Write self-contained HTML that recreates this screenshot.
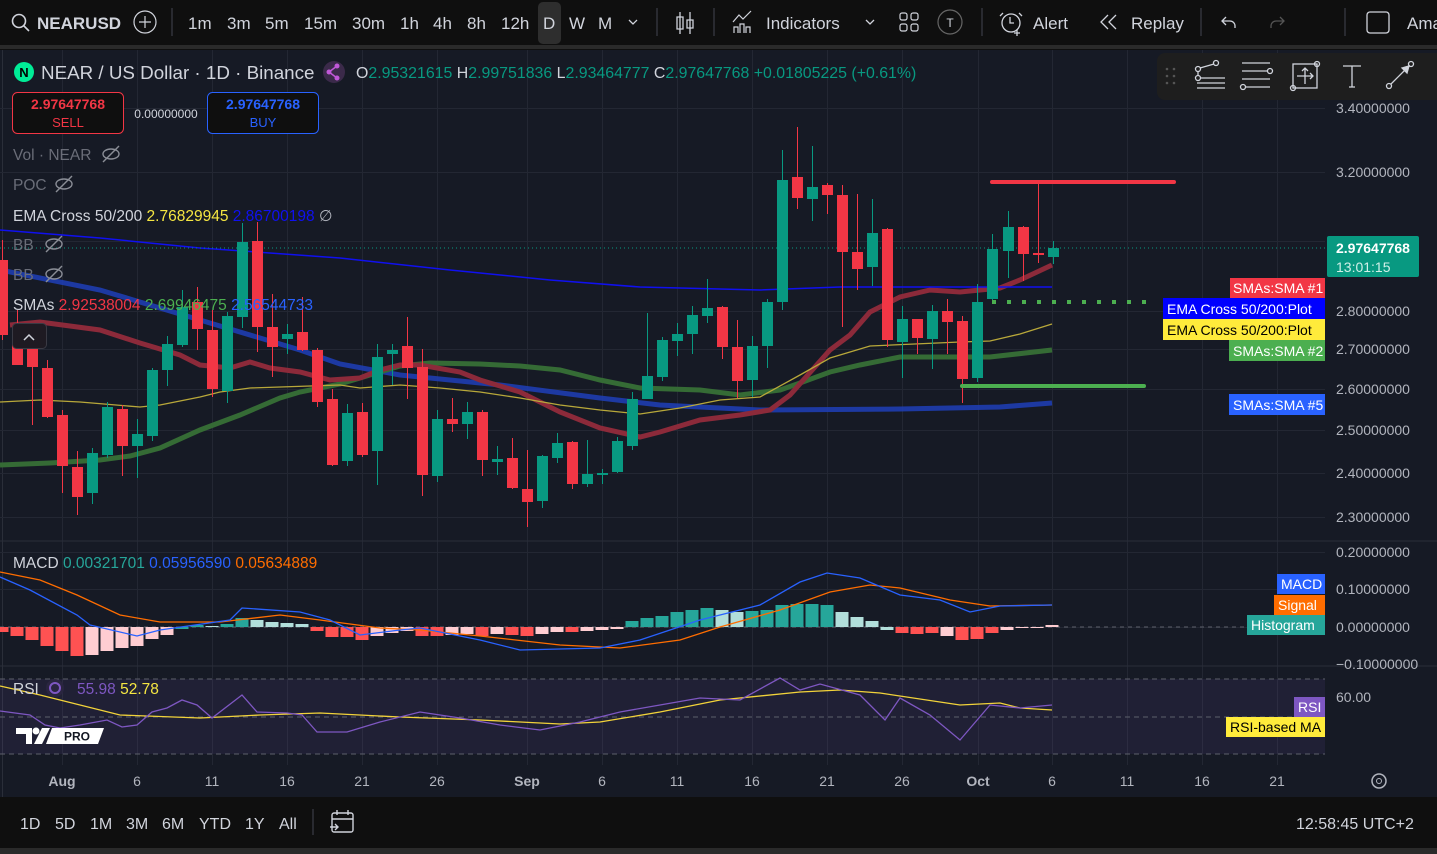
<!DOCTYPE html>
<html><head><meta charset="utf-8"><style>
*{margin:0;padding:0;box-sizing:border-box}
body{width:1437px;height:854px;background:#0f0f0f;overflow:hidden;font-family:"Liberation Sans",sans-serif;color:#d1d4dc;position:relative}
svg{position:absolute;left:0;top:0}
</style></head><body>
<svg id="s" width="1437" height="854" xmlns="http://www.w3.org/2000/svg" font-family="Liberation Sans, sans-serif">
<rect x="0" y="0" width="1437" height="854" fill="#0f0f0f"/>
<rect x="0" y="45" width="1437" height="4" fill="#2a2a2a"/>
<rect x="0" y="50" width="1437" height="747" fill="#161a25"/>
<rect x="2" y="50" width="1" height="747" fill="#2a2e39"/>
<g id="grid" stroke="#232733" stroke-width="1"></g>
<line x1="0" y1="541" x2="1437" y2="541" stroke="#2a2e39"/>
<line x1="0" y1="666" x2="1437" y2="666" stroke="#2a2e39"/>
<rect x="0" y="679" width="1325" height="75" fill="#7e57c2" fill-opacity="0.1"/>
<g stroke="#5d606b" stroke-dasharray="5,4" stroke-width="1">
<line x1="0" y1="679" x2="1325" y2="679"/><line x1="0" y1="717" x2="1325" y2="717"/><line x1="0" y1="754" x2="1325" y2="754"/>
</g>
<line x1="0" y1="627" x2="1325" y2="627" stroke="#5d606b" stroke-dasharray="4,4"/>
<polyline fill="none" stroke="#1e3fb8" stroke-opacity="0.85" stroke-width="5" points="0,270 100,290 200,320 300,350 340,364 400,375 500,385 600,398 660,405 760,410 900,409 1000,407 1052,403"/>
<polyline fill="none" stroke="#356b35" stroke-width="5" points="0,465 50,463 100,460 130,456 160,448 200,430 240,415 280,398 300,392 340,384 370,375 400,366 430,363 480,364 520,366 560,370 600,380 640,388 700,390 740,395 780,390 800,383 830,372 860,365 900,357 990,357 1052,350"/>
<polyline fill="none" stroke="#8c2a3a" stroke-width="5" points="10,325 40,322 100,330 140,343 180,355 200,365 230,368 250,362 270,368 300,372 330,380 360,378 380,370 400,365 420,365 460,372 480,380 520,392 560,412 600,428 640,437 660,432 700,420 740,415 770,410 790,395 830,350 850,335 870,312 900,297 930,290 960,292 1000,288 1020,280 1052,265"/>
<polyline fill="none" stroke="#b8a83a" stroke-width="1.3" points="0,402 40,400 80,402 140,407 160,405 200,397 220,392 250,388 340,385 360,388 400,385 440,388 480,392 520,398 560,405 600,410 640,414 680,408 720,400 760,397 800,375 830,358 870,346 960,342 990,341 1020,334 1052,324"/>
<polyline fill="none" stroke="#1010f0" stroke-width="1.5" points="0,230 100,238 200,248 340,258 450,270 550,280 640,287 760,290 840,287 1052,287"/>
<line x1="0" y1="248" x2="1325" y2="248" stroke="#089981" stroke-dasharray="1,3"/>
<g id="candles"></g>
<line x1="992" y1="182" x2="1174" y2="182" stroke="#f23645" stroke-width="4" stroke-linecap="round"/>
<line x1="992" y1="302" x2="1150" y2="302" stroke="#4caf50" stroke-width="4" stroke-dasharray="4,11"/>
<line x1="962" y1="386" x2="1144" y2="386" stroke="#4caf50" stroke-width="4" stroke-linecap="round"/>
<g id="hist"></g>
<polyline fill="none" stroke="#ff6d00" stroke-width="1.3" points="0,572 40,580 77,595 120,615 160,622 220,622 280,615 320,620 380,628 420,630 480,636 560,645 620,648 680,640 720,627 780,610 830,592 870,585 900,588 950,600 990,606 1052,605"/>
<polyline fill="none" stroke="#2962ff" stroke-width="1.3" points="0,577 30,590 77,615 90,625 137,636 160,630 230,620 242,608 300,612 330,620 360,635 400,630 420,628 480,640 520,650 600,648 640,640 700,620 760,605 800,582 827,573 860,578 900,595 940,600 970,612 1000,606 1052,605"/>
<polyline fill="none" stroke="#f2d33a" stroke-width="1.3" points="0,686 40,695 120,715 200,718 260,715 320,713 400,717 480,720 560,724 600,722 660,712 720,700 800,692 840,690 880,693 960,705 1000,703 1020,708 1052,710"/>
<polyline fill="none" stroke="#7e57c2" stroke-width="1.3" points="0,711 30,715 45,725 60,728 80,725 107,720 122,727 137,725 152,712 167,708 182,700 197,705 212,718 242,695 257,712 287,713 302,715 317,732 347,732 380,722 420,712 460,718 500,725 540,730 580,722 620,712 660,705 700,698 740,700 780,678 800,690 820,684 860,695 885,720 900,698 930,715 960,740 990,705 1020,708 1052,705"/>
<rect x="1327" y="236" width="92" height="41" rx="2" fill="#089981"/>
<rect x="1230" y="278" width="95" height="20" fill="#f23645"/>
<rect x="1163" y="298" width="162" height="21" fill="#0000ff"/>
<rect x="1163" y="319" width="162" height="21" fill="#ffeb3b"/>
<rect x="1229" y="340" width="96" height="21" fill="#4caf50"/>
<rect x="1229" y="394" width="96" height="21" fill="#2962ff"/>
<rect x="1277" y="574" width="48" height="20" fill="#2962ff"/>
<rect x="1274" y="595" width="51" height="20" fill="#ff6d00"/>
<rect x="1247" y="615" width="78" height="20" fill="#26a69a"/>
<rect x="1294" y="697" width="31" height="20" fill="#7e57c2"/>
<rect x="1226" y="717" width="99" height="20" fill="#ffeb3b"/>
<g font-size="14" fill="#fff">
<text x="1336" y="253" font-weight="bold">2.97647768</text>
<text x="1336" y="272" fill="#d0f0e8">13:01:15</text>
<text x="1233" y="293">SMAs:SMA #1</text>
<text x="1167" y="314">EMA Cross 50/200:Plot</text>
<text x="1167" y="335" fill="#000">EMA Cross 50/200:Plot</text>
<text x="1233" y="356">SMAs:SMA #2</text>
<text x="1233" y="410">SMAs:SMA #5</text>
<text x="1281" y="589">MACD</text>
<text x="1278" y="610">Signal</text>
<text x="1251" y="630">Histogram</text>
<text x="1298" y="712">RSI</text>
<text x="1230" y="732" fill="#000">RSI-based MA</text>
</g>
<g font-size="14" fill="#b2b5be">
<text x="1336" y="113">3.40000000</text><text x="1336" y="177">3.20000000</text><text x="1336" y="316">2.80000000</text>
<text x="1336" y="354">2.70000000</text><text x="1336" y="394">2.60000000</text><text x="1336" y="435">2.50000000</text>
<text x="1336" y="478">2.40000000</text><text x="1336" y="522">2.30000000</text>
<text x="1336" y="557">0.20000000</text><text x="1336" y="594">0.10000000</text><text x="1336" y="632">0.00000000</text><text x="1336" y="669">−0.10000000</text>
<text x="1336" y="702">60.00</text>
</g>
<g font-size="14" fill="#b2b5be" text-anchor="middle">
<text x="62" y="786" font-weight="bold">Aug</text><text x="137" y="786">6</text><text x="212" y="786">11</text><text x="287" y="786">16</text><text x="362" y="786">21</text><text x="437" y="786">26</text><text x="527" y="786" font-weight="bold">Sep</text><text x="602" y="786">6</text><text x="677" y="786">11</text><text x="752" y="786">16</text><text x="827" y="786">21</text><text x="902" y="786">26</text><text x="978" y="786" font-weight="bold">Oct</text><text x="1052" y="786">6</text><text x="1127" y="786">11</text><text x="1202" y="786">16</text><text x="1277" y="786">21</text>
</g>
<circle cx="1379" cy="781" r="7" fill="none" stroke="#b2b5be" stroke-width="1.5"/><circle cx="1379" cy="781" r="2.5" fill="none" stroke="#b2b5be"/>
<rect x="0" y="797" width="1437" height="51" fill="#0f0f0f"/>
<rect x="0" y="848" width="1437" height="6" fill="#2a2a2a"/>
<g font-size="16" fill="#d1d4dc"><text x="20" y="829">1D</text><text x="55" y="829">5D</text><text x="90" y="829">1M</text><text x="126" y="829">3M</text><text x="162" y="829">6M</text><text x="199" y="829">YTD</text><text x="245" y="829">1Y</text><text x="279" y="829">All</text>
<text x="1296" y="829">12:58:45 UTC+2</text></g>
<line x1="313" y1="809" x2="313" y2="835" stroke="#434651"/>
<g fill="none" stroke="#d1d4dc" stroke-width="1.4"><rect x="332" y="813" width="21" height="19" rx="2"/><line x1="332" y1="819" x2="353" y2="819"/><line x1="337" y1="810" x2="337" y2="815"/><line x1="348" y1="810" x2="348" y2="815"/><path d="M330 827h8m-3-3l3 3-3 3"/></g>
<g transform="translate(16,726)"><path d="M0 2h16v16h-6v-10h-10z" fill="#fff"/><circle cx="20" cy="5" r="3.5" fill="#fff"/><path d="M26 2h8l-8 16h-8z" fill="#fff"/><path d="M36 2h52l-6 16h-52z" fill="#fff"/><text x="48" y="14.5" font-size="12" font-weight="bold" fill="#131722">PRO</text></g>
<g fill="none" stroke="#d1d4dc" stroke-width="1.6">
<circle cx="19" cy="21" r="6.5"/><line x1="24" y1="26" x2="29" y2="31"/>
<circle cx="145" cy="22" r="11" stroke-width="1.2"/><path d="M145 16v12M139 22h12" stroke-width="1.2"/>
<path d="M680 12v22M690 12v22M677 17h6v12h-6zM687 20h6v8h-6z" stroke-width="1.3"/>
<path d="M734 33v-6h4v6M740 33v-9h4v9M746 33v-6h4v6M733 22l6-7 4 4 8-8" stroke-width="1.2"/>
<rect x="900" y="13" width="7" height="7" rx="2" stroke-width="1.2"/><rect x="911" y="13" width="7" height="7" rx="2" stroke-width="1.2"/><rect x="900" y="24" width="7" height="7" rx="2" stroke-width="1.2"/><rect x="911" y="24" width="7" height="7" rx="2" stroke-width="1.2"/>
<circle cx="950" cy="22" r="12" stroke="#666" stroke-width="1.2"/>
<circle cx="1011" cy="23" r="9" stroke-width="1.3"/><path d="M1010 17v6h4M1003 13l-3 3M1019 13l3 3M1017 30v6M1014 33h6" stroke-width="1.3"/>
<path d="M1108 15l-7 7 7 7M1116 15l-7 7 7 7" stroke-width="1.3"/>
<path d="M1226 17l-4 4 4 4M1222 21h8a5 5 0 0 1 5 5v2" stroke-width="1.3"/>
<path d="M1280 17l4 4-4 4M1284 21h-8a5 5 0 0 0-5 5v2" stroke="#555" stroke-width="1.3"/>
<rect x="1367" y="12" width="22" height="21" rx="3" stroke-width="1.3"/>
</g>
<text x="950" y="27" font-size="12" fill="#d1d4dc" text-anchor="middle">T</text>
<g stroke="#434651"><line x1="172" y1="8" x2="172" y2="36"/><line x1="657" y1="8" x2="657" y2="36"/><line x1="714" y1="8" x2="714" y2="36"/><line x1="982" y1="8" x2="982" y2="36"/><line x1="1201" y1="8" x2="1201" y2="36"/><line x1="1345" y1="8" x2="1345" y2="36"/></g>
<rect x="538" y="2" width="23" height="42" rx="5" fill="#2e2e2e"/>
<g font-size="17" fill="#d1d4dc">
<text x="37" y="29" font-weight="bold">NEARUSD</text>
<text x="188" y="29">1m</text><text x="227" y="29">3m</text><text x="265" y="29">5m</text><text x="304" y="29">15m</text><text x="352" y="29">30m</text><text x="400" y="29">1h</text><text x="433" y="29">4h</text><text x="467" y="29">8h</text><text x="501" y="29">12h</text><text x="543" y="29">D</text><text x="569" y="29">W</text><text x="598" y="29">M</text>
<text x="766" y="29">Indicators</text><text x="1033" y="29">Alert</text><text x="1131" y="29">Replay</text><text x="1407" y="29">Ama</text>
</g>
<path d="M629 20l4 4 4-4M866 20l4 4 4-4" fill="none" stroke="#d1d4dc" stroke-width="1.3"/>
<rect x="1157" y="53" width="290" height="47" rx="8" fill="#1e1e1e"/>
<g fill="#555"><circle cx="1167" cy="69" r="1.3"/><circle cx="1174" cy="69" r="1.3"/><circle cx="1167" cy="76" r="1.3"/><circle cx="1174" cy="76" r="1.3"/><circle cx="1167" cy="83" r="1.3"/><circle cx="1174" cy="83" r="1.3"/></g>
<g fill="none" stroke="#d1d4dc" stroke-width="1.3">
<circle cx="1198" cy="69" r="2.5"/><circle cx="1216" cy="63" r="2.5"/><circle cx="1198" cy="78" r="2.5"/><path d="M1200 68l14-4M1198 72v4M1201 78h24M1197 83h28M1197 88h28"/>
<path d="M1242 63h28M1242 71h25M1242 79h28M1246 87h24"/><circle cx="1270" cy="71" r="2.5"/><circle cx="1243" cy="87" r="2.5"/>
<rect x="1293" y="64" width="24" height="24"/><circle cx="1293" cy="88" r="2.5"/><circle cx="1317" cy="64" r="2.5"/><path d="M1305 68v16M1297 76h16M1302 71l3-3 3 3M1310 73l3 3-3 3"/>
<path d="M1343 66h18M1352 66v21M1349 87h6"/>
<circle cx="1389" cy="86" r="2.5"/><circle cx="1411" cy="64" r="2.5"/><path d="M1391 84l16-16"/><path d="M1402 68l7-2-2 7z" fill="#d1d4dc"/>
</g>
<circle cx="24" cy="72" r="10" fill="#00ec97"/><text x="24" y="77" font-size="13" font-weight="bold" fill="#000" text-anchor="middle">N</text>
<text x="41" y="79" font-size="18.8" fill="#d1d4dc">NEAR / US Dollar · 1D · Binance</text>
<circle cx="334" cy="72" r="11" fill="#3b2a4a"/><g fill="#c058d8"><circle cx="329" cy="72" r="2.5"/><circle cx="337" cy="66" r="2.5"/><circle cx="337" cy="78" r="2.5"/></g><path d="M329 72l8-6M329 72l8 6" stroke="#c058d8" stroke-width="1.5"/>
<text x="356" y="78" font-size="15.9" fill="#d1d4dc">O<tspan fill="#089981">2.95321615</tspan> H<tspan fill="#089981">2.99751836</tspan> L<tspan fill="#089981">2.93464777</tspan> C<tspan fill="#089981">2.97647768</tspan> <tspan fill="#089981">+0.01805225 (+0.61%)</tspan></text>
<rect x="12.5" y="92.5" width="111" height="41" rx="5" fill="#0f0f0f" stroke="#f23645"/>
<rect x="207.5" y="92.5" width="111" height="41" rx="5" fill="#0f0f0f" stroke="#2962ff"/>
<g font-size="14" text-anchor="middle"><text x="68" y="109" fill="#f23645" font-weight="bold">2.97647768</text><text x="68" y="127" fill="#f23645" font-size="13">SELL</text>
<text x="263" y="109" fill="#2962ff" font-weight="bold">2.97647768</text><text x="263" y="127" fill="#2962ff" font-size="13">BUY</text>
<text x="166" y="118" fill="#d1d4dc" font-size="12">0.00000000</text></g>
<g font-size="15.5">
<text x="13" y="160" fill="#6a6d78">Vol · NEAR</text>
<text x="13" y="190" fill="#6a6d78">POC</text>
<text x="13" y="221" fill="#d1d4dc">EMA Cross 50/200 <tspan fill="#f5e642">2.76829945</tspan> <tspan fill="#1010f0">2.86700198</tspan> <tspan fill="#b2b5be">∅</tspan></text>
<text x="13" y="250" fill="#6a6d78">BB</text>
<text x="13" y="280" fill="#6a6d78">BB</text>
<text x="13" y="310" fill="#d1d4dc">SMAs <tspan fill="#f23645">2.92538004</tspan> <tspan fill="#4caf50">2.69946475</tspan> <tspan fill="#2962ff">2.56544733</tspan></text>
<text x="13" y="568" fill="#d1d4dc">MACD <tspan fill="#26a69a">0.00321701</tspan> <tspan fill="#2962ff">0.05956590</tspan> <tspan fill="#ff6d00">0.05634889</tspan></text>
<text x="13" y="694" fill="#d1d4dc">RSI</text>
<text x="77" y="694" fill="#7e57c2">55.98 <tspan fill="#f5e642">52.78</tspan></text>
</g>
<g fill="none" stroke="#8a8d96" stroke-width="1.4">
<ellipse cx="111" cy="154" rx="8" ry="5"/><line x1="103" y1="162" x2="119" y2="146"/>
<ellipse cx="64" cy="184" rx="8" ry="5"/><line x1="56" y1="192" x2="72" y2="176"/>
<ellipse cx="54" cy="244" rx="8" ry="5"/><line x1="46" y1="252" x2="62" y2="236"/>
<ellipse cx="54" cy="274" rx="8" ry="5"/><line x1="46" y1="282" x2="62" y2="266"/>
</g>
<circle cx="55" cy="688" r="9" fill="#2a2540"/><circle cx="55" cy="688" r="5" fill="none" stroke="#7e57c2" stroke-width="2"/>
<rect x="12.5" y="323.5" width="34" height="25" rx="4" fill="#1e1a22" stroke="#3a3a44"/><path d="M24 340l5-5 5 5" fill="none" stroke="#d1d4dc" stroke-width="1.5"/>
</svg>
<script>
var NS="http://www.w3.org/2000/svg";
function el(p,n,a){var e=document.createElementNS(NS,n);for(var k in a)e.setAttribute(k,a[k]);p.appendChild(e);return e;}
var g=document.getElementById('grid');
[108,172,241,311,349,389,430,473,517,552,589,627].forEach(function(y){el(g,'line',{x1:0,y1:y+.5,x2:1325,y2:y+.5});});
[62,137,212,287,362,437,527,602,677,752,827,902,978,1052,1127,1202,1277].forEach(function(x){el(g,'line',{x1:x+.5,y1:50,x2:x+.5,y2:765});});
var C=[[2,260,335,240,340],[17,335,365,310,365],[32,348,367,338,425],[47,368,417,360,418],[62,415,466,410,493],[77,467,497,451,515],[92,493,453,448,504],[107,455,407,402,458],[122,409,446,405,476],[137,446,434,419,478],[152,436,370,368,441],[167,370,344,336,386],[182,345,307,290,347],[197,302,329,287,350],[212,330,389,310,397],[227,391,316,312,403],[242,317,242,223,328],[257,241,327,222,352],[272,327,347,294,377],[287,339,334,324,354],[302,332,350,297,351],[317,350,402,348,407],[332,399,465,389,466],[347,461,413,404,466],[362,412,455,403,457],[377,451,357,344,485],[392,354,350,344,385],[407,346,368,317,399],[422,367,475,349,496],[437,476,419,410,482],[452,419,424,398,432],[467,424,412,402,439],[482,412,460,410,476],[497,462,459,446,475],[512,458,488,438,489],[527,489,502,450,527],[542,501,456,455,508],[557,458,443,433,463],[572,442,484,441,489],[587,484,474,440,487],[602,474,473,469,484],[617,472,441,437,473],[632,446,399,392,450],[647,399,376,313,399],[662,377,340,337,381],[677,341,334,323,356],[692,334,315,306,354],[707,316,308,279,323],[722,307,347,306,359],[737,347,381,320,398],[752,380,346,336,397],[767,346,302,299,368],[782,302,180,150,310],[797,177,198,127,209],[812,199,187,146,221],[827,185,195,183,214],[842,195,252,185,327],[857,252,269,194,290],[872,267,233,199,286],[887,229,340,228,347],[902,342,319,306,378],[917,319,338,319,354],[932,339,311,305,369],[947,311,322,299,354],[962,321,379,316,403],[977,378,302,284,382],[992,299,249,234,304],[1008,251,227,211,278],[1023,227,254,226,281],[1038,253,255,180,263],[1053,257,248,241,264]];
var cg=document.getElementById('candles');
C.forEach(function(c){var up=c[2]<c[1],col=up?'#089981':'#f23645';
el(cg,'line',{x1:c[0]+.5,y1:c[3],x2:c[0]+.5,y2:c[4],stroke:col,'stroke-width':1});
var t=Math.min(c[1],c[2]),h=Math.max(2,Math.abs(c[1]-c[2]));el(cg,'rect',{x:c[0]-5,y:t,width:11,height:h,fill:col});});
var H=[632,636,640,646,651,656,655,651,648,646,639,635,629,625,626,624,618,620,622,623,624,631,637,637,640,636,633,631,636,636,635,634,636,634,635,636,634,632,632,631,630,629,621,618,616,612,610,608,610,612,611,610,605,604,604,605,612,617,621,630,633,634,633,636,640,639,633,630,628,628,625];
var K='rrrrrrppppppttLtTLLLLrrrrppprrpprprrpprpppttttttLLttttttLLLLrrrprrrppppt';
var hg=document.getElementById('hist');
H.forEach(function(y,i){var k=K[i],col=k=='r'?'#ff5252':k=='p'?'#ffcdd2':(k=='t'||k=='T')?'#26a69a':'#b2dfdb';
var x=2+15*i;el(hg,'rect',{x:x-6.5,y:Math.min(y,627),width:13,height:Math.max(1,Math.abs(y-627)),fill:col});});
</script>
</body></html>
